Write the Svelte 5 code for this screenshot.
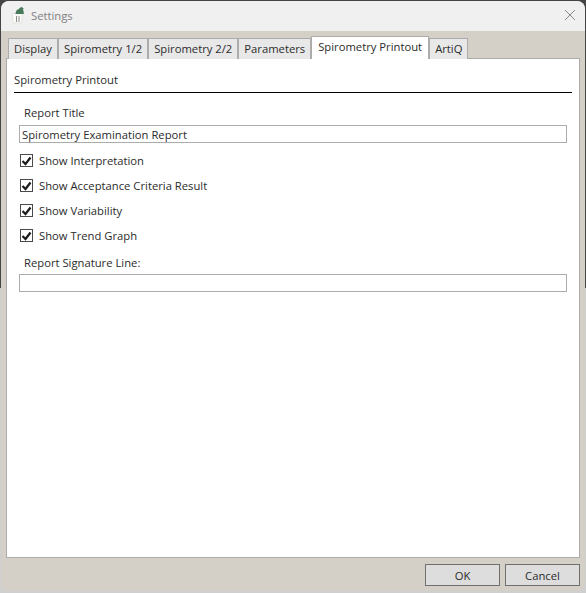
<script>
  let reportTitle = $state("Spirometry Examination Report");
  let signatureLine = $state("");
  const tabs = ["Display", "Spirometry 1/2", "Spirometry 2/2", "Parameters", "Spirometry Printout", "ArtiQ"];
  const activeTab = "Spirometry Printout";
  const options = ["Show Interpretation", "Show Acceptance Criteria Result", "Show Variability", "Show Trend Graph"];
</script>

<div class="desktop">
  <div class="window">
    <header class="titlebar">
      <svg class="app-icon" width="14" height="18" viewBox="0 0 14 18">
        <path d="M1 7.5h10.5l-.8 9.5H2z" fill="#f9f9f7" stroke="#d6d6d4" stroke-width="0.6" />
        <path d="M4.5 8c0-3 1.5-4.5 3.5-5 .6-1 1.6-2 2.6-2l2 1.2-.6 1.6c.6 1 .8 2.6.8 4.2z" fill="#47795a" />
        <path d="M5 10h1v6H5zM7.5 10h1v6h-1z" fill="#8d8d8d" />
      </svg>
      <span class="title">Settings</span>
      <svg class="close" width="12" height="12" viewBox="0 0 12 12">
        <path d="M1 1l10 10M11 1L1 11" stroke="#8a8a8a" stroke-width="1" fill="none" />
      </svg>
    </header>

    <div class="content">
      <div class="tabs">
        {#each tabs as tab}
          <div class="tab" class:active={tab === activeTab}>{tab}</div>
        {/each}
      </div>

      <main class="panel">
        <div class="section-title">Spirometry Printout</div>

        <div class="field-label">Report Title</div>
        <input class="text-input" type="text" bind:value={reportTitle} />

        <div class="checks">
          {#each options as option}
            <label class="check">
              <span class="box">
                <svg width="11" height="10" viewBox="0 0 11 10">
                  <path d="M1.5 5l3 3 5-6.5" stroke="#1c1c1c" stroke-width="2.2" fill="none" />
                </svg>
              </span>
              {option}
            </label>
          {/each}
        </div>

        <div class="field-label sig">Report Signature Line:</div>
        <input class="text-input" type="text" bind:value={signatureLine} />
      </main>

      <footer class="buttons">
        <button>OK</button>
        <button>Cancel</button>
      </footer>
    </div>
  </div>
</div>

<style>
  :global(body) {
    margin: 0;
  }

  .desktop {
    width: 586px;
    height: 593px;
    box-sizing: border-box;
    padding: 1px 1px 2px 1px;
    background: linear-gradient(#444 0 288px, #cfcfcf 288px);
  }

  .window {
    height: 100%;
    box-sizing: border-box;
    display: flex;
    flex-direction: column;
    font-family: "Open Sans", "Noto Sans", sans-serif;
    font-size: 11.25px;
    color: #2b2b2b;
    background: #d4d0c8;
    border-radius: 8px;
    overflow: hidden;
  }

  .titlebar {
    height: 30px;
    box-sizing: border-box;
    flex: none;
    background: #f0f0f0;
    display: flex;
    align-items: center;
    padding: 0 9px 2px 10px;
    gap: 6px;
  }

  .title {
    color: #808080;
  }

  .close {
    margin-left: auto;
  }

  .content {
    flex: 1;
    display: flex;
    flex-direction: column;
    padding: 5px;
    min-height: 0;
  }

  .tabs {
    display: flex;
    align-items: flex-end;
    height: 23px;
    padding-left: 2px;
    margin-bottom: -1px;
    position: relative;
    z-index: 1;
  }

  .tab {
    height: 21px;
    box-sizing: border-box;
    border: 1px solid #acacac;
    border-bottom: none;
    background: #e8e8e8;
    padding: 0 5px;
    line-height: 19px;
    white-space: nowrap;
  }

  .tab.active {
    height: 23px;
    background: #fff;
    padding: 0 6px;
    line-height: 20px;
  }

  .panel {
    flex: 1;
    background: #fff;
    border: 1px solid #acacac;
    padding: 13px 7px 0;
    min-height: 0;
  }

  .section-title {
    border-bottom: 1px solid #000;
    line-height: 16px;
    height: 16px;
    padding-bottom: 4px;
  }

  .field-label {
    margin: 12px 0 0 10px;
    line-height: 16px;
    padding-bottom: 4px;
  }

  .field-label.sig {
    margin-top: 7px;
    padding-bottom: 3px;
  }

  .text-input {
    display: block;
    width: 548px;
    height: 18px;
    margin-left: 5px;
    box-sizing: border-box;
    border: 1px solid #acacac;
    padding: 0 2px;
    font: inherit;
    color: inherit;
    outline: none;
  }

  .checks {
    display: flex;
    flex-direction: column;
    margin-top: 5px;
    margin-left: 5px;
  }

  .check {
    display: flex;
    align-items: center;
    height: 25px;
    gap: 6px;
  }

  .box {
    width: 13px;
    height: 13px;
    margin-left: 1px;
    box-sizing: border-box;
    border: 1px solid #4a4a4a;
    display: flex;
    align-items: center;
    justify-content: center;
  }

  .buttons {
    display: flex;
    justify-content: flex-end;
    gap: 5px;
    padding-top: 6px;
    height: 22px;
    flex: none;
  }

  button {
    width: 75px;
    height: 22px;
    box-sizing: border-box;
    border: 1px solid #707070;
    background: #dddddd;
    font: inherit;
    color: #2b2b2b;
    padding: 0;
  }
</style>
